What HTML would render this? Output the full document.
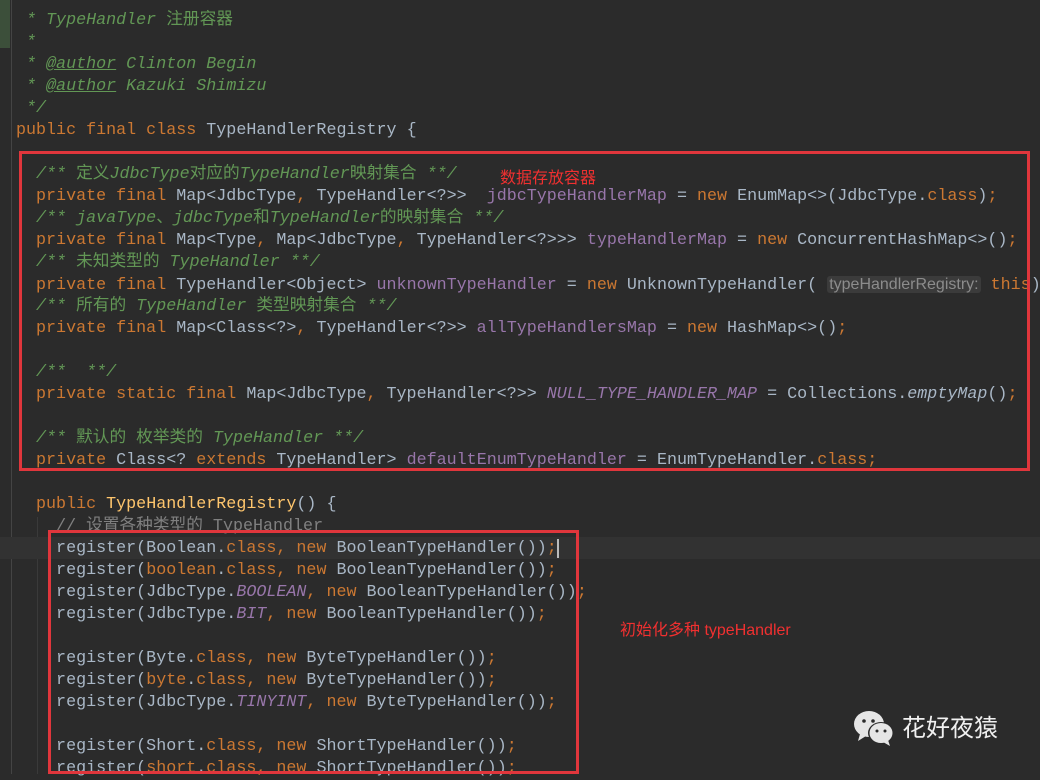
<!DOCTYPE html>
<html><head><meta charset="utf-8"><style>
html,body{margin:0;padding:0;}
body{width:1040px;height:774px;background:#2b2b2b;overflow:hidden;position:relative;font-family:"Liberation Mono","Noto Sans CJK SC",monospace;font-size:16.7px;color:#a9b7c6;}
.w{position:absolute;left:0;top:2px;width:1040px;height:774px}
.l{position:absolute;left:16px;height:22px;line-height:22px;white-space:pre;}
.k{color:#cc7832}.c{color:#629755;font-style:italic}.cn{color:#629755}
.g{color:#808080}.f{color:#9876aa}.s{color:#9876aa;font-style:italic}.m{color:#ffc66d}.i{font-style:italic}
.u{text-decoration:underline}
.box{position:absolute;border:3px solid #e0363c;box-sizing:border-box}
.red{position:absolute;color:#f03030;font-family:"Liberation Sans","Noto Sans CJK SC",sans-serif;font-size:16px}
.hint{background:#3b3b3b;color:#8c8c8c;font-family:"Liberation Sans","Noto Sans CJK SC",sans-serif;font-size:16px;border-radius:3px;padding:0 2px}
</style></head><body>
<div style="position:absolute;left:11px;top:0;width:1px;height:774px;background:#444"></div>
<div style="position:absolute;left:0;top:0;width:10px;height:48px;background:#3c4f3a"></div>
<div style="position:absolute;left:37px;top:517px;width:1px;height:257px;background:#3a3a3a"></div>
<div style="position:absolute;left:0;top:537px;width:1040px;height:22px;background:#323232"></div>
<div class="w">
<div class="l" style="top:8px"><span class="c"> * TypeHandler </span><span class="cn">注册容器</span></div>
<div class="l" style="top:30px"><span class="c"> *</span></div>
<div class="l" style="top:52px"><span class="c"> * <b class="u" style="font-weight:normal">@author</b> Clinton Begin</span></div>
<div class="l" style="top:74px"><span class="c"> * <b class="u" style="font-weight:normal">@author</b> Kazuki Shimizu</span></div>
<div class="l" style="top:96px"><span class="c"> */</span></div>
<div class="l" style="top:118px"><span class="k">public final class </span>TypeHandlerRegistry {</div>
<div class="l" style="top:162px">  <span class="c">/** </span><span class="cn">定义</span><span class="c">JdbcType</span><span class="cn">对应的</span><span class="c">TypeHandler</span><span class="cn">映射集合</span><span class="c"> **/</span></div>
<div class="l" style="top:184px">  <span class="k">private final </span>Map&lt;JdbcType<span class="k">, </span>TypeHandler&lt;?&gt;&gt;  <span class="f">jdbcTypeHandlerMap</span> = <span class="k">new </span>EnumMap&lt;&gt;(JdbcType.<span class="k">class</span>)<span class="k">;</span></div>
<div class="l" style="top:206px">  <span class="c">/** javaType</span><span class="cn">、</span><span class="c">jdbcType</span><span class="cn">和</span><span class="c">TypeHandler</span><span class="cn">的映射集合</span><span class="c"> **/</span></div>
<div class="l" style="top:228px">  <span class="k">private final </span>Map&lt;Type<span class="k">, </span>Map&lt;JdbcType<span class="k">, </span>TypeHandler&lt;?&gt;&gt;&gt; <span class="f">typeHandlerMap</span> = <span class="k">new </span>ConcurrentHashMap&lt;&gt;()<span class="k">;</span></div>
<div class="l" style="top:250px">  <span class="c">/** </span><span class="cn">未知类型的 </span><span class="c">TypeHandler **/</span></div>
<div class="l" style="top:272px">  <span class="k">private final </span>TypeHandler&lt;Object&gt; <span class="f">unknownTypeHandler</span> = <span class="k">new </span>UnknownTypeHandler( <span class="hint">typeHandlerRegistry:</span> <span class="k">this</span>)<span class="k">;</span></div>
<div class="l" style="top:294px">  <span class="c">/** </span><span class="cn">所有的 </span><span class="c">TypeHandler </span><span class="cn">类型映射集合</span><span class="c"> **/</span></div>
<div class="l" style="top:316px">  <span class="k">private final </span>Map&lt;Class&lt;?&gt;<span class="k">, </span>TypeHandler&lt;?&gt;&gt; <span class="f">allTypeHandlersMap</span> = <span class="k">new </span>HashMap&lt;&gt;()<span class="k">;</span></div>
<div class="l" style="top:360px">  <span class="c">/**  **/</span></div>
<div class="l" style="top:382px">  <span class="k">private static final </span>Map&lt;JdbcType<span class="k">, </span>TypeHandler&lt;?&gt;&gt; <span class="s">NULL_TYPE_HANDLER_MAP</span> = Collections.<span class="i">emptyMap</span>()<span class="k">;</span></div>
<div class="l" style="top:426px">  <span class="c">/** </span><span class="cn">默认的 枚举类的 </span><span class="c">TypeHandler **/</span></div>
<div class="l" style="top:448px">  <span class="k">private </span>Class&lt;? <span class="k">extends </span>TypeHandler&gt; <span class="f">defaultEnumTypeHandler</span> = EnumTypeHandler.<span class="k">class;</span></div>
<div class="l" style="top:492px">  <span class="k">public </span><span class="m">TypeHandlerRegistry</span>() {</div>
<div class="l" style="top:514px">    <span class="g">// </span><span class="g">设置各种类型的 TypeHandler</span></div>
<div class="l" style="top:536px">    register(Boolean.<span class="k">class, new </span>BooleanTypeHandler())<span class="k">;</span><span style="border-left:2px solid #bbb"></span></div>
<div class="l" style="top:558px">    register(<span class="k">boolean</span>.<span class="k">class, new </span>BooleanTypeHandler())<span class="k">;</span></div>
<div class="l" style="top:580px">    register(JdbcType.<span class="s">BOOLEAN</span><span class="k">, new </span>BooleanTypeHandler())<span class="k">;</span></div>
<div class="l" style="top:602px">    register(JdbcType.<span class="s">BIT</span><span class="k">, new </span>BooleanTypeHandler())<span class="k">;</span></div>
<div class="l" style="top:646px">    register(Byte.<span class="k">class, new </span>ByteTypeHandler())<span class="k">;</span></div>
<div class="l" style="top:668px">    register(<span class="k">byte</span>.<span class="k">class, new </span>ByteTypeHandler())<span class="k">;</span></div>
<div class="l" style="top:690px">    register(JdbcType.<span class="s">TINYINT</span><span class="k">, new </span>ByteTypeHandler())<span class="k">;</span></div>
<div class="l" style="top:734px">    register(Short.<span class="k">class, new </span>ShortTypeHandler())<span class="k">;</span></div>
<div class="l" style="top:756px">    register(<span class="k">short</span>.<span class="k">class, new </span>ShortTypeHandler())<span class="k">;</span></div>
</div>
<div class="box" style="left:19px;top:151px;width:1011px;height:320px"></div>
<div class="box" style="left:48px;top:530px;width:531px;height:244px"></div>
<div class="red" style="left:500px;top:164px">数据存放容器</div>
<div class="red" style="left:620px;top:616px">初始化多种 typeHandler</div>
<svg style="position:absolute;left:852px;top:708px" width="46" height="40" viewBox="0 0 46 40">
<ellipse cx="17" cy="16" rx="15" ry="13" fill="#e6e6e6"/><path d="M8 26 L6 33 L14 28Z" fill="#e6e6e6"/>
<ellipse cx="29" cy="25" rx="13" ry="11" fill="#2b2b2b"/>
<ellipse cx="29" cy="25" rx="11.5" ry="10" fill="#e6e6e6"/><path d="M36 32 L38 38 L31 34Z" fill="#e6e6e6"/>
<circle cx="12" cy="13" r="1.8" fill="#2b2b2b"/><circle cx="21" cy="13" r="1.8" fill="#2b2b2b"/>
<circle cx="25" cy="23" r="1.5" fill="#2b2b2b"/><circle cx="33" cy="23" r="1.5" fill="#2b2b2b"/>
</svg>
<div style="position:absolute;left:902px;top:710px;color:#f0f0f0;font-family:'Noto Sans CJK SC',sans-serif;font-size:24px;line-height:32px">花好夜猿</div>
</body></html>
